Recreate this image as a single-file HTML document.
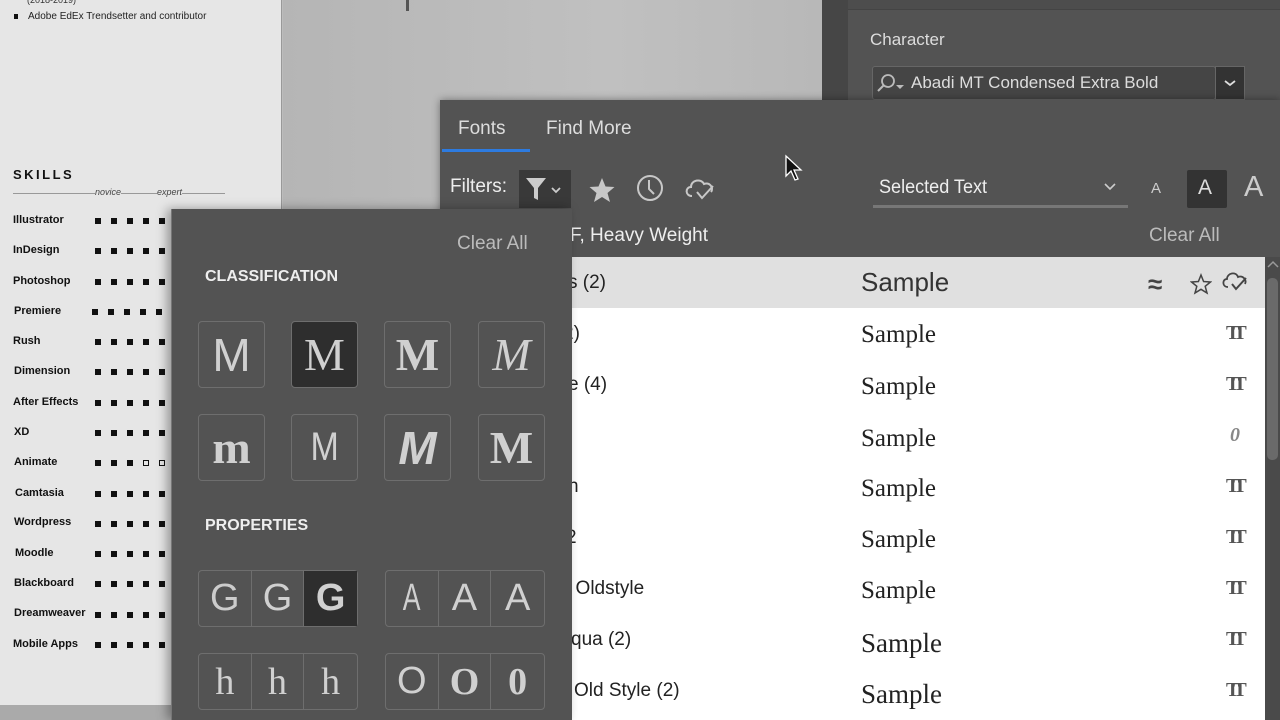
<!DOCTYPE html>
<html><head><meta charset="utf-8"><style>
*{margin:0;padding:0;box-sizing:border-box}
body{width:1280px;height:720px;overflow:hidden;position:relative;background:#bcbcbc;font-family:"Liberation Sans",sans-serif}
.abs{position:absolute}
#resume{left:0;top:0;width:282px;height:705px;background:#e6e6e6;border-right:1px solid #999}
#bottom{left:0;top:705px;width:282px;height:15px;background:#aaa}
.sk{position:absolute;font-size:11px;font-weight:bold;color:#111}
.dots{position:absolute;left:95px;display:flex;gap:10px}
.dots i{display:block;width:6px;height:6px;background:#111}
.dots i.o{background:transparent;border:1px solid #111}
#mid{left:283px;top:0;width:540px;height:720px;background:linear-gradient(90deg,#b5b5b5,#c0c0c0 60%,#b8b8b8)}
#rp{left:822px;top:0;width:458px;height:100px;background:#535353;border-left:26px solid #464646}
.tx{color:#ddd;position:absolute;white-space:nowrap}
#fonts{left:440px;top:100px;width:840px;height:620px;background:#535353;box-shadow:0 0 8px rgba(0,0,0,.4)}
#list{left:440px;top:257px;width:825px;height:463px;background:#fff}
.row{position:absolute;left:0;width:825px;height:51px}
.samp{position:absolute;left:421px;font-family:"Liberation Serif",serif;font-size:25px;color:#222}
.name{position:absolute;left:126px;font-size:19px;color:#222;white-space:nowrap}
.tt{position:absolute;left:786px;font-family:"Liberation Serif",serif;font-weight:bold;font-size:20px;color:#555;letter-spacing:-6px}
#filt{left:171px;top:209px;width:401px;height:511px;background:#535353;border-left:1px solid #777;box-shadow:-4px 0 10px rgba(0,0,0,.35)}
.box{position:absolute;width:67px;height:67px;border:1px solid #6e6e6e;border-radius:4px;color:#d0d0d0;display:flex;align-items:center;justify-content:center;font-size:46px}
.grp{position:absolute;height:57px;border:1px solid #6e6e6e;border-radius:4px;display:flex}
.grp div{width:33.33%;display:flex;align-items:center;justify-content:center;color:#d0d0d0;font-size:38px;border-right:1px solid #6e6e6e}
.grp div:last-child{border-right:none}
</style></head><body>
<div id="resume" class="abs">
 <div class="abs" style="left:27px;top:-5px;font-size:9px;color:#333">(2018-2019)</div>
 <div class="abs" style="left:14px;top:14px;width:4px;height:5px;background:#111"></div>
 <div class="abs" style="left:28px;top:11px;font-size:10px;color:#222">Adobe EdEx Trendsetter and contributor</div>
 <div class="abs" style="left:13px;top:167px;font-size:13px;font-weight:bold;letter-spacing:2.5px;color:#111">SKILLS</div>
 <div class="abs" style="left:13px;top:193px;width:212px;height:1px;background:#999"></div>
 <div class="abs" style="left:95px;top:187px;font-size:9px;font-style:italic;color:#444;background:#e6e6e6">novice</div>
 <div class="abs" style="left:157px;top:187px;font-size:9px;font-style:italic;color:#444;background:#e6e6e6">expert</div>
 <div class="sk" style="left:13px;top:214px">Illustrator</div><div class="dots" style="top:218px"><i></i><i></i><i></i><i></i><i></i></div>
 <div class="sk" style="left:13px;top:244px">InDesign</div><div class="dots" style="top:248px"><i></i><i></i><i></i><i></i><i></i></div>
 <div class="sk" style="left:13px;top:275px">Photoshop</div><div class="dots" style="top:279px"><i></i><i></i><i></i><i></i><i></i></div>
 <div class="sk" style="left:14px;top:305px">Premiere</div><div class="dots" style="left:92px;top:309px"><i></i><i></i><i></i><i></i><i></i></div>
 <div class="sk" style="left:13px;top:335px">Rush</div><div class="dots" style="top:339px"><i></i><i></i><i></i><i></i><i></i></div>
 <div class="sk" style="left:14px;top:365px">Dimension</div><div class="dots" style="top:369px"><i></i><i></i><i></i><i></i><i></i></div>
 <div class="sk" style="left:13px;top:396px">After Effects</div><div class="dots" style="top:400px"><i></i><i></i><i></i><i></i><i></i></div>
 <div class="sk" style="left:14px;top:426px">XD</div><div class="dots" style="top:430px"><i></i><i></i><i></i><i></i><i></i></div>
 <div class="sk" style="left:14px;top:456px">Animate</div><div class="dots" style="top:460px"><i></i><i></i><i></i><i class="o"></i><i class="o"></i></div>
 <div class="sk" style="left:15px;top:487px">Camtasia</div><div class="dots" style="top:491px"><i></i><i></i><i></i><i></i><i></i></div>
 <div class="sk" style="left:14px;top:516px">Wordpress</div><div class="dots" style="top:521px"><i></i><i></i><i></i><i></i><i></i></div>
 <div class="sk" style="left:15px;top:547px">Moodle</div><div class="dots" style="top:551px"><i></i><i></i><i></i><i></i><i></i></div>
 <div class="sk" style="left:14px;top:577px">Blackboard</div><div class="dots" style="top:581px"><i></i><i></i><i></i><i></i><i></i></div>
 <div class="sk" style="left:14px;top:607px">Dreamweaver</div><div class="dots" style="top:612px"><i></i><i></i><i></i><i></i><i></i></div>
 <div class="sk" style="left:13px;top:638px">Mobile Apps</div><div class="dots" style="top:642px"><i></i><i></i><i></i><i></i><i></i></div>
</div>
<div id="bottom" class="abs"></div>
<div id="mid" class="abs"><div class="abs" style="left:123px;top:0;width:3px;height:11px;background:#555"></div></div>
<div id="rp" class="abs">
 <div class="abs" style="left:0;top:0;width:432px;height:10px;background:#4d4d4d;border-bottom:1px solid #444"></div>
 <div class="tx" style="left:22px;top:30px;font-size:17px">Character</div>
 <div class="abs" style="left:24px;top:66px;width:344px;height:34px;background:#454545;border:1px solid #666;border-radius:3px"></div>
 <svg class="abs" style="left:28px;top:72px" width="34" height="22"><circle cx="12" cy="9" r="6" fill="none" stroke="#bbb" stroke-width="1.8"/><path d="M8 13 L2 19" stroke="#bbb" stroke-width="2"/><path d="M20 13 L28 13 L24 17Z" fill="#bbb"/></svg>
 <div class="tx" style="left:63px;top:73px;font-size:17px">Abadi MT Condensed Extra Bold</div>
 <div class="abs" style="left:367px;top:66px;width:30px;height:34px;background:#333;border:1px solid #666"></div>
 <svg class="abs" style="left:374px;top:78px" width="16" height="10"><path d="M3 3 L8 7 L13 3" fill="none" stroke="#ddd" stroke-width="1.8"/></svg>
</div>
<div id="fonts" class="abs">
 <div class="tx" style="left:18px;top:18px;font-size:19px">Fonts</div>
 <div class="tx" style="left:106px;top:18px;font-size:19px">Find More</div>
 <div class="abs" style="left:2px;top:49px;width:88px;height:3px;background:#2d7be0"></div>
 <div class="tx" style="left:10px;top:76px;font-size:19px;color:#eee">Filters:</div>
 <div class="abs" style="left:79px;top:70px;width:52px;height:38px;background:#393939"></div>
 <svg class="abs" style="left:84px;top:76px" width="46" height="28"><path d="M2 2 H22 L14 12 V24 L10 22 V12Z" fill="#ccc"/><path d="M28 12 L32 16 L36 12" fill="none" stroke="#ccc" stroke-width="1.8"/></svg>
 <svg class="abs" style="left:148px;top:76px" width="30" height="28"><path d="M14 2 L17.5 10.5 L26.5 11 L19.5 17 L22 26 L14 21 L6 26 L8.5 17 L1.5 11 L10.5 10.5Z" fill="#c8c8c8"/></svg>
 <svg class="abs" style="left:195px;top:73px" width="30" height="30"><circle cx="15" cy="15" r="12" fill="none" stroke="#c8c8c8" stroke-width="2"/><path d="M14 7 V16 L19 21" fill="none" stroke="#c8c8c8" stroke-width="2"/></svg>
 <svg class="abs" style="left:243px;top:74px" width="34" height="30"><path d="M9 22 C2 22 2 13 8 13 C8 6 18 4 21 10 C27 8 31 14 28 18" fill="none" stroke="#c8c8c8" stroke-width="2"/><path d="M14 18 L19 24 L30 12" fill="none" stroke="#c8c8c8" stroke-width="2"/></svg>
 <svg class="abs" style="left:342px;top:52px" width="24" height="34"><path d="M4 4 V24 L9 19 L13 28 L16 27 L12 18 L19 18Z" fill="#111" stroke="#fff" stroke-width="1.3"/></svg>
 <div class="tx" style="left:439px;top:77px;font-size:19px;color:#eee;transform:scaleX(.95);transform-origin:left">Selected Text</div>
 <svg class="abs" style="left:663px;top:82px" width="14" height="10"><path d="M2 2 L7 7 L12 2" fill="none" stroke="#ccc" stroke-width="1.6"/></svg>
 <div class="abs" style="left:433px;top:105px;width:255px;height:3px;background:#777"></div>
 <div class="tx" style="left:711px;top:80px;font-size:15px;color:#ccc">A</div>
 <div class="abs" style="left:747px;top:70px;width:40px;height:38px;background:#333;border-radius:2px"></div>
 <div class="tx" style="left:758px;top:76px;font-size:21px;color:#ddd">A</div>
 <div class="tx" style="left:804px;top:71px;font-size:29px;color:#ccc">A</div>
 <div class="tx" style="left:130px;top:125px;font-size:19px;color:#eee">F, Heavy Weight</div>
 <div class="tx" style="left:709px;top:125px;font-size:19px;color:#bbb">Clear All</div>
 <div class="abs" style="left:825px;top:157px;width:15px;height:463px;background:#4a4a4a"></div>
 <div class="abs" style="left:827px;top:178px;width:11px;height:182px;background:#6a6a6a;border-radius:5px"></div>
 <svg class="abs" style="left:826px;top:160px" width="14" height="10"><path d="M2 7 L7 2 L12 7" fill="none" stroke="#999" stroke-width="1.5"/></svg>
</div>
<div id="list" class="abs">
 <div class="row" style="top:0;background:#e0e0e0"><div class="name" style="top:15px;left:128px">s (2)</div><div class="samp" style="top:10px;font-family:'Liberation Sans',sans-serif;font-size:26px;color:#333">Sample</div>
 <div class="tx" style="left:708px;top:12px;font-size:26px;color:#444;font-weight:bold">≈</div>
 <svg class="abs" style="left:750px;top:16px" width="22" height="22"><path d="M11 2 L13.6 8.5 L20.5 9 L15.2 13.3 L17 20 L11 16.3 L5 20 L6.8 13.3 L1.5 9 L8.4 8.5Z" fill="none" stroke="#444" stroke-width="1.5"/></svg>
 <svg class="abs" style="left:780px;top:12px" width="30" height="26"><path d="M8 18 C2 18 2 10 7 10 C7 4 16 2 18 8 C23 6 27 11 25 15" fill="none" stroke="#444" stroke-width="1.8"/><path d="M12 15 L16 20 L26 9" fill="none" stroke="#444" stroke-width="2"/></svg></div>
 <div class="row" style="top:51px"><div class="name" style="top:15px;left:123px">2)</div><div class="samp" style="top:13px">Sample</div><div class="tt" style="top:14px">TT</div></div>
 <div class="row" style="top:102px"><div class="name" style="top:15px;left:128px">e (4)</div><div class="samp" style="top:14px">Sample</div><div class="tt" style="top:14px">TT</div></div>
 <div class="row" style="top:153px"><div class="samp" style="top:15px">Sample</div><div class="tt" style="top:14px;font-style:italic;color:#888;letter-spacing:0;left:790px">0</div></div>
 <div class="row" style="top:204px"><div class="name" style="top:15px;left:128px">n</div><div class="samp" style="top:14px">Sample</div><div class="tt" style="top:14px">TT</div></div>
 <div class="row" style="top:255px"><div class="name" style="top:15px;left:126px">2</div><div class="samp" style="top:14px">Sample</div><div class="tt" style="top:14px">TT</div></div>
 <div class="row" style="top:306px"><div class="name" style="top:15px;left:125px">t Oldstyle</div><div class="samp" style="top:14px">Sample</div><div class="tt" style="top:14px">TT</div></div>
 <div class="row" style="top:357px"><div class="name" style="top:15px;left:131px">qua (2)</div><div class="samp" style="top:14px;font-size:27px">Sample</div><div class="tt" style="top:14px">TT</div></div>
 <div class="row" style="top:408px"><div class="name" style="top:15px;left:134px">Old Style (2)</div><div class="samp" style="top:14px;font-size:27px">Sample</div><div class="tt" style="top:14px">TT</div></div>
</div>
<div id="filt" class="abs">
 <div class="tx" style="left:285px;top:24px;font-size:19px;color:#bbb">Clear All</div>
 <div class="tx" style="left:33px;top:59px;font-size:16px;font-weight:bold;color:#eee">CLASSIFICATION</div>
 <div class="box" style="left:26px;top:112px">M</div>
 <div class="box" style="left:119px;top:112px;background:#2e2e2e;font-family:'Liberation Serif',serif">M</div>
 <div class="box" style="left:212px;top:112px;font-family:'Liberation Serif',serif;font-weight:bold">M</div>
 <div class="box" style="left:306px;top:112px;font-family:'Liberation Serif',serif;font-style:italic">M</div>
 <div class="box" style="left:26px;top:205px;font-family:'Liberation Serif',serif;font-weight:bold">m</div>
 <div class="box" style="left:119px;top:205px;font-size:40px"><span style="display:inline-block;transform:scaleX(.85)">M</span></div>
 <div class="box" style="left:212px;top:205px;font-style:italic;font-weight:bold">M</div>
 <div class="box" style="left:306px;top:205px;font-family:'Liberation Serif',serif;font-weight:bold">M</div>
 <div class="tx" style="left:33px;top:308px;font-size:16px;font-weight:bold;color:#eee">PROPERTIES</div>
 <div class="grp" style="left:26px;top:361px;width:160px"><div style="color:#ccc">G</div><div>G</div><div style="background:#2e2e2e;font-weight:bold">G</div></div>
 <div class="grp" style="left:213px;top:361px;width:160px"><div><span style="display:inline-block;transform:scaleX(.7)">A</span></div><div>A</div><div>A</div></div>
 <div class="grp" style="left:26px;top:444px;width:160px"><div style="font-family:'Liberation Serif',serif">h</div><div style="font-family:'Liberation Serif',serif">h</div><div style="font-family:'Liberation Serif',serif">h</div></div>
 <div class="grp" style="left:213px;top:444px;width:160px"><div>O</div><div style="font-family:'Liberation Serif',serif;font-weight:bold">O</div><div style="font-family:'Liberation Serif',serif;font-weight:bold">0</div></div>
</div>
</body></html>
